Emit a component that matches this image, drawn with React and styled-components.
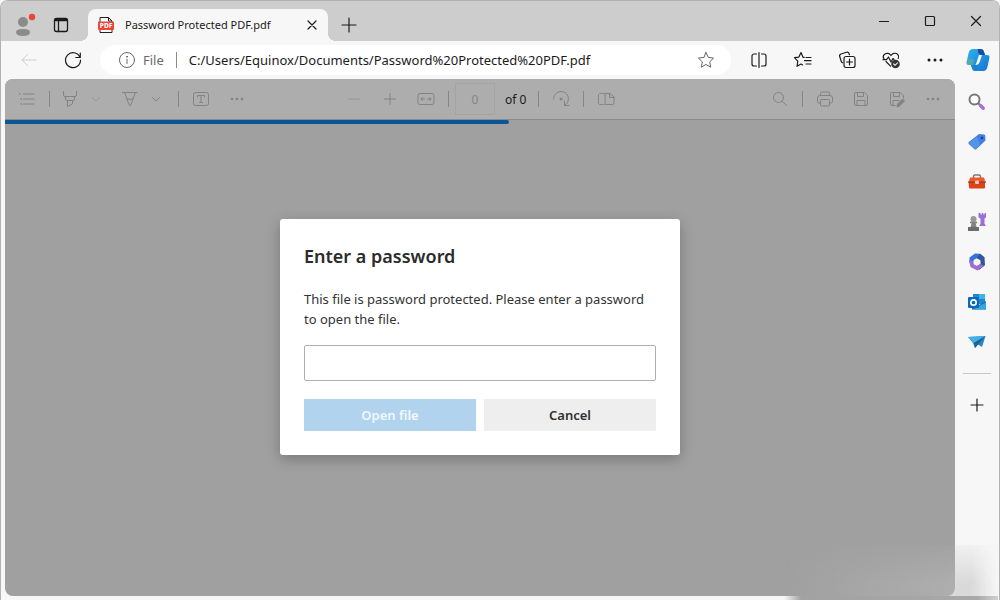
import React, { useState } from "react";
import styled, { createGlobalStyle } from "styled-components";

const GlobalStyle = createGlobalStyle`
  *, *::before, *::after { box-sizing: border-box; }
  body {
    margin: 0;
    font-family: "Noto Sans", "Open Sans", sans-serif;
    font-size: 13px;
    color: #1b1b1b;
    background: #f7f7f7;
  }
  button, input { font: inherit; color: inherit; }
  svg { display: block; flex: none; }
`;

const Window = styled.div`
  position: relative;
  display: flex;
  flex-direction: column;
  min-height: 100vh;
  background: #f7f7f7;
  border: 1px solid #b2b2b2;
  border-bottom-width: 0;
  border-radius: 8px 8px 0 0;
  overflow: hidden;
`;

const TitleBar = styled.header`
  display: flex;
  align-items: flex-end;
  height: 40px;
  padding-left: 4px;
  background: #cdcdcd;
`;

const IconButton = styled.button`
  display: flex;
  align-items: center;
  justify-content: center;
  flex: none;
  width: ${(p) => p.$w || 36}px;
  height: ${(p) => p.$h || 32}px;
  padding: 0;
  border: 0;
  background: transparent;
  color: ${(p) => p.$color || "#1b1b1b"};
`;

const Tab = styled.div`
  position: relative;
  display: flex;
  align-items: center;
  flex: 0 1 240px;
  height: 32px;
  margin-left: 9px;
  padding: 0 4px 0 10px;
  gap: 11px;
  border-radius: 8px 8px 0 0;
  background: #f7f7f7;
  &::before, &::after {
    content: "";
    position: absolute;
    bottom: 0;
    width: 8px;
    height: 8px;
  }
  &::before {
    right: 100%;
    background: radial-gradient(circle at 0 0, transparent 8px, #f7f7f7 8px);
  }
  &::after {
    left: 100%;
    background: radial-gradient(circle at 100% 0, transparent 8px, #f7f7f7 8px);
  }
`;

const TabTitle = styled.span`
  flex: 1;
  font-size: 11px;
  line-height: 16px;
  white-space: nowrap;
`;

const WindowControls = styled.div`
  display: flex;
  align-self: flex-start;
  margin-left: auto;
`;

const NavBar = styled.nav`
  display: flex;
  align-items: center;
  height: 38px;
  padding-left: 6px;
`;

const AddressBar = styled.label`
  display: flex;
  align-items: center;
  flex: 1;
  min-width: 0;
  height: 30px;
  margin: 0 6px 0 5px;
  padding: 0 9px 0 17px;
  border-radius: 15px;
  background: #fff;
`;

const Scheme = styled.span`
  margin-left: 6px;
  padding-right: 12px;
  border-right: 1px solid #8a8a8a;
  line-height: 16px;
  color: #6b6b6b;
`;

const AddressInput = styled.input`
  flex: 1;
  min-width: 0;
  padding: 0 0 0 12px;
  border: 0;
  outline: 0;
  background: transparent;
`;

const Body = styled.div`
  display: flex;
  flex: 1;
`;

const Viewer = styled.main`
  position: relative;
  display: flex;
  flex-direction: column;
  flex: 1;
  min-width: 0;
  margin: 0 0 4px 4px;
  border-radius: 8px;
  background: #a0a0a0;
  overflow: hidden;
`;

const PdfToolbar = styled.div`
  display: grid;
  grid-template-columns: 1fr auto 1fr;
  align-items: center;
  height: 41px;
  padding: 0 4px;
  border-bottom: 1px solid #8b8b8b;
  background: #adadad;
`;

const ToolGroup = styled.div`
  display: flex;
  align-items: center;
  justify-content: ${(p) => (p.$end ? "flex-end" : "flex-start")};
`;

const SplitTool = styled.div`
  display: flex;
  padding-right: 8px;
`;

const Separator = styled.span`
  flex: none;
  width: 1px;
  height: 16px;
  margin: 0 4px;
  background: #868686;
`;

const PageInput = styled.input`
  width: 40px;
  height: 32px;
  margin: 0 2px;
  padding: 0;
  border: 1px solid #a3a3a3;
  background: transparent;
  color: #858585;
  font-size: 12px;
  text-align: center;
`;

const PageCount = styled.span`
  width: 37px;
  padding-left: 8px;
  font-size: 12px;
  white-space: nowrap;
`;

const Progress = styled.div`
  height: 4px;
  border-radius: 0 2px 2px 0;
  background: #0b5796;
`;

const Overlay = styled.div`
  position: absolute;
  inset: 0;
  display: grid;
  place-items: center;
  padding-bottom: 2px;
`;

const Dialog = styled.form`
  width: 400px;
  padding: 24px;
  border-radius: 3px;
  background: #fff;
  box-shadow: 0 4px 14px rgba(0, 0, 0, 0.26);
`;

const DialogTitle = styled.h1`
  margin: 0 0 20px;
  font-size: 18px;
  font-weight: 600;
  line-height: 26px;
  color: #2b2b2b;
`;

const DialogText = styled.label`
  display: block;
  margin-bottom: 16px;
  line-height: 20px;
  color: #333;
`;

const PasswordInput = styled.input`
  display: block;
  width: 100%;
  height: 36px;
  padding: 0 8px;
  border: 1px solid #b0b0b0;
  border-radius: 2px;
  outline: 0;
  background: #fff;
`;

const DialogActions = styled.div`
  display: grid;
  grid-template-columns: 1fr 1fr;
  gap: 8px;
  margin-top: 18px;
`;

const DialogButton = styled.button`
  height: 32px;
  padding: 0;
  border: 0;
  background: ${(p) => (p.$primary ? "#b1d3ee" : "#eeeeee")};
  color: ${(p) => (p.$primary ? "#eef9ff" : "#303030")};
  font-weight: 600;
`;

const Sidebar = styled.aside`
  display: flex;
  flex-direction: column;
  align-items: center;
  flex: none;
  width: 44px;
  padding-top: 3px;
`;

const SidebarDivider = styled.hr`
  width: 28px;
  margin: 11px 0;
  border: 0;
  border-top: 1px solid #c8c8c8;
`;

const Haze = styled.div`
  position: absolute;
  right: 1px;
  bottom: 0;
  width: 214px;
  height: 55px;
  pointer-events: none;
  background:
    linear-gradient(to right, rgba(160, 160, 160, 0), #a2a2a2 8%, #a8a8a8 90%, #d0d0d0) bottom / 100% 4px no-repeat,
    linear-gradient(to right, rgba(188, 188, 188, 0) 0%, rgba(188, 188, 188, 0.5) 80%, rgba(205, 205, 205, 0.7) 88%, rgba(225, 225, 225, 0.5) 95%, rgba(245, 245, 245, 0.3) 100%);
  mask-image: linear-gradient(to bottom, rgba(0, 0, 0, 0.2), #000 70%);
`;

function Icon({ size = 20, sw = 1, children }) {
  return (
    <svg width={size} height={size} viewBox={`0 0 ${size} ${size}`} fill="none" stroke="currentColor" strokeWidth={sw} strokeLinecap="round" strokeLinejoin="round" aria-hidden="true">
      {children}
    </svg>
  );
}

const Plus = ({ r = 6.5, sw = 1.2 }) => <Icon sw={sw}><path d={`M10 ${10 - r}v${2 * r}M${10 - r} 10h${2 * r}`} /></Icon>;
const Minus = () => <Icon><path d="M4 10h11.500" /></Icon>;
const Chevron = () => <Icon size={12}><path d="M2.500 4.500 6 8l3.500-3.500" /></Icon>;
const Dots = ({ r = 1.5, gap = 6 }) => (
  <Icon><g fill="currentColor" stroke="none"><circle cx={10 - gap} cy="10" r={r} /><circle cx="10" cy="10" r={r} /><circle cx={10 + gap} cy="10" r={r} /></g></Icon>
);

const Profile = () => (
  <svg width="24" height="26" viewBox="0 0 24 26" aria-hidden="true">
    <circle cx="11" cy="10" r="5" fill="#8b8b8b" />
    <path d="M4 20q0-3 7-3t7 3q0 4-7 4t-7-4z" fill="#8b8b8b" />
    <circle cx="20" cy="5" r="3.200" fill="#ee4530" />
  </svg>
);
const TabActions = () => (
  <Icon sw={1.3}><rect x="3.500" y="3.500" width="13" height="13" rx="2" /><path d="M4.500 5h11" strokeWidth="2.600" /><path d="M7.500 6v10.500" /></Icon>
);
const PdfFile = () => (
  <svg width="16" height="18" viewBox="0 0 16 18" aria-hidden="true">
    <path d="M2 6V1.500h8.500L14 5v1M2 14v2.500h12V14" fill="#fff" stroke="#222" />
    <path d="M10.500 1.500V5H14" fill="none" stroke="#222" />
    <rect x="0" y="5.500" width="16" height="8.500" rx="1" fill="#ef4437" />
    <text x="8" y="12.300" textAnchor="middle" fontSize="6.500" fontWeight="800" fill="#fff" fontFamily="Noto Sans, sans-serif">PDF</text>
  </svg>
);
const Close = () => <Icon size={12} sw={1.2}><path d="m2 2 8 8M10 2l-8 8" /></Icon>;
const Back = () => <Icon><path d="M17 10H3M8.500 4.500 3 10l5.500 5.500" /></Icon>;
const Reload = () => <Icon sw={1.2}><path d="M16.800 7A7.500 7.500 0 1 0 17.500 10M17.300 3v4.500h-4.500" /></Icon>;
const Info = () => <Icon><circle cx="10" cy="10" r="7.500" /><path d="M10 9.200v4.300" /><circle cx="10" cy="6.700" r=".5" fill="currentColor" /></Icon>;
const Star = () => <Icon><path d="m10 2.500 2.300 4.900 5.300.7-3.900 3.700 1 5.300L10 14.500l-4.700 2.600 1-5.300L2.400 8.100l5.300-.7z" /></Icon>;
const SplitScreen = () => <Icon sw={1.2}><path d="M7.500 4H5a2 2 0 0 0-2 2v8a2 2 0 0 0 2 2h2.500M12.500 4H15a2 2 0 0 1 2 2v8a2 2 0 0 1-2 2h-2.500M10 2.500v15" /></Icon>;
const Favorites = () => <Icon sw={1.2}><path d="M11.200 7.300H10L8 2.600 5.900 7.100l-4.400.6 3.300 3.400-.8 5.200 4-2.300 1.600.9M13 7.500h5M11.500 10.700H18M13 14h5" /></Icon>;
const Collections = () => <Icon sw={1.2}><path d="M12.500 4.700 12 3.500a2 2 0 0 0-2.500-1.200l-5.500 1.700A2 2 0 0 0 2.700 6.500L4.300 11.500A2 2 0 0 0 5.500 12.800" /><rect x="7" y="6.500" width="11" height="11" rx="2" /><path d="M12.500 9v6M9.500 12h6" /></Icon>;
const Performance = () => (
  <Icon sw={1.2}>
    <path d="M3 9C.8 5.700 4 2.700 7.200 3.400 8.700 3.700 10 5.500 10 5.500s1.300-1.800 2.800-2.100C16 2.700 19 5.500 17.200 8.500M5 11.500l4.500 4.700M2 9.700h3.500L7.500 7l2.500 5 2-3.500 1 1.200" />
    <circle cx="14.500" cy="14" r="4.300" fill="#303830" stroke="none" /><path d="m12.700 14 1.300 1.300 2.500-2.500" stroke="#dfe4df" />
  </Icon>
);
const Copilot = () => (
  <svg width="24" height="24" viewBox="0 0 24 24" aria-hidden="true">
    <defs><linearGradient id="cp" x1="0" y1="0" x2="1" y2="1"><stop offset="0" stopColor="#29b5ea" /><stop offset="1" stopColor="#1672d6" /></linearGradient></defs>
    <path d="M7 1h8q2 0 2.700 2L19 7h2q3 0 2.400 3l-2 9q-1 4-4 4H9q-2 0-2.700-2L5 17H3Q0 17 .6 14l2-9Q3.500 1 7 1z" fill="url(#cp)" />
    <path d="M12 1h2q3 0 3.700 2L19 7h-4q-2 0-3-3z" fill="#174ca5" />
    <path d="m5 17 1.300 4Q7 23 10 23l2-4q-1-2-3-2z" fill="#1b83d0" />
    <path d="M1 12q5-2 7 0l-1 5H3q-3 0-2-5z" fill="#8cb577" opacity=".5" />
    <path d="M13 7h3l-2.300 7q-1 3-4.500 3 1-1 1.500-3z" fill="#f7fbff" />
  </svg>
);

const List = () => <Icon><path d="M6.500 5h10.500M6.500 10h10.500M6.500 15h10.500" /><path d="M2.500 5h.3M4 10h.3M4 15h.3" strokeWidth="1.500" /></Icon>;
const Highlighter = () => <Icon><path d="M3.500 2.500V6a1.500 1.500 0 0 0 1.500 1.500h10A1.500 1.500 0 0 0 16.500 6V2.500M5.500 7.500V10a1.500 1.500 0 0 0 1.500 1.500h6A1.500 1.500 0 0 0 14.500 10V7.500M7.500 11.500v6l5-2.700v-3.300" /></Icon>;
const Pen = () => <Icon><path d="M2.500 3.500h15M4.500 3.500l4.300 11.500L10 17l1.200-2 4.300-11.500M6.700 9.500c1.500 1.300 5.100 1.300 6.600 0" /></Icon>;
const TextTool = () => <Icon><rect x="2.500" y="3.500" width="15" height="13" rx="2" /><path d="M6.500 8V6.500h7V8M10 6.500v7M8.500 13.500h3" /></Icon>;
const FitWidth = () => <Icon><rect x="2" y="4.500" width="16" height="11" rx="2" /><path d="M5 10h3.500M6.500 8.500 5 10l1.500 1.500M15 10h-3.500M13.500 8.500 15 10l-1.500 1.500" /></Icon>;
const Rotate = () => <Icon><path d="M2.500 10A7.500 7.500 0 1 1 14 16.300M13.500 12v4.500H18" /><circle cx="10" cy="10" r="1" fill="currentColor" /></Icon>;
const PageView = () => <Icon><path d="M8 4.500H4A1.500 1.500 0 0 0 2.500 6v8A1.500 1.500 0 0 0 4 15.500h4" strokeDasharray="2 1" /><path d="M9.500 4.500h4.500l4 3.500v6a1.500 1.500 0 0 1-1.500 1.500h-7zM13.500 4.500V8.500H18" /></Icon>;
const Search = () => <Icon><circle cx="8.500" cy="8.500" r="5" /><path d="m12.200 12.200 4.300 4.300" /></Icon>;
const Printer = () => <Icon><path d="M5.500 6.500V4.500A1.500 1.500 0 0 1 7 3h6a1.500 1.500 0 0 1 1.500 1.500v2M5.500 14H4a1.500 1.500 0 0 1-1.500-1.500V9A2.500 2.500 0 0 1 5 6.500h10A2.500 2.500 0 0 1 17.500 9v3.500A1.500 1.500 0 0 1 16 14h-1.500" /><rect x="5.500" y="10.500" width="9" height="6.500" rx="1" /></Icon>;
const Save = () => <Icon><path d="M4.500 3.500h9l3 3v8.500a1.500 1.500 0 0 1-1.500 1.500H5A1.500 1.500 0 0 1 3.500 15V4.500a1 1 0 0 1 1-1zM6.500 3.500v4h6v-4M6 16.500v-5h8v5" /></Icon>;
const SaveAs = () => <Icon><path d="M8 16.500H5A1.500 1.500 0 0 1 3.500 15V4.500a1 1 0 0 1 1-1h9l3 3V9M6.500 3.500v4h6v-4M6 16.500v-5h6" /><path d="m10 17.500.5-2.500 5-5 2 2-5 5z" fill="currentColor" /></Icon>;

const ColorIcon = ({ children }) => <svg width="20" height="20" viewBox="0 0 20 20" aria-hidden="true">{children}</svg>;
const SideSearch = () => <ColorIcon><circle cx="7.500" cy="7.500" r="5" fill="#fff" stroke="#777" strokeWidth="2" /><path d="m11.200 11.200 2 2" stroke="#777" strokeWidth="2" /><path d="m13.500 13.500 2.700 2.700" stroke="#a66fd8" strokeWidth="3.500" strokeLinecap="round" /></ColorIcon>;
const Shopping = () => <ColorIcon><path d="M12 2 17 2.500q1 0 1.200 1l.3 5-9 8.500q-1.200 1-2.200 0l-5.500-5q-1-1 0-2z" fill="#3e7fe0" /><path d="m2 11 8-6.500 3 8-5 5z" fill="#66a0ee" opacity=".6" /><circle cx="15" cy="6" r="1.300" fill="#164583" /></ColorIcon>;
const Tools = () => <ColorIcon><path d="M6.500 6V4.500Q6.500 3 8 3h4q1.500 0 1.500 1.500V6" fill="none" stroke="#7a7a7a" strokeWidth="1.500" /><path d="M3 5.500h14L18.500 11h-17z" fill="#ed5a27" /><path d="M1.500 10H18v5.500q0 1-1 1H3q-1 0-1-1z" fill="#dc4418" /><path d="M1 10h18" stroke="#9e2e12" /><rect x="8" y="8.500" width="4" height="3.500" rx="1" fill="#e8c7b8" /></ColorIcon>;
const Games = () => <ColorIcon><path d="M11.500 1h2V2.500h1.300V1h1.500V2.500h1.200V1H19V5.500l-1.500 1v5L18.800 14h-6.500L13.500 11.500V6.500l-2-1z" fill="#9a70d6" /><circle cx="6.500" cy="7" r="3" fill="#999" /><path d="M3 9.500h7v1.700H8.700l1 4.300H3.500l1-4.300H3z" fill="#858585" /><path d="M1 15h11v4H1z" fill="#6c6c6c" /></ColorIcon>;
const Office = () => <ColorIcon><path d="m8 1.500 5 .2 4.500 4-3.500 3-4.500-2.500-3 2V14l-4-3V5.500z" fill="#3375d8" /><path d="m13 1.700 4.500 3.500.5 8L12 18l-2-4 3.500-2V7.500L9.500 6z" fill="#315798" /><path d="m2 8 4 1v3l4 2 3.500-2 3.500 2-6.500 4.500-7-3.500z" fill="#a06bd2" /><path d="m10 7 3 1.500v3l-3 1.500-3-1.500v-3z" fill="#f7f7f7" /></ColorIcon>;
const Outlook = () => <ColorIcon><path d="M6 2h12v10H6z" fill="#2386cf" /><path d="M12 2h6v5h-6z" fill="#3fb1ea" /><path d="M5 9l7 4 7-4v8.500H5z" fill="#1e6fb8" /><path d="m6 17.500 13-7v7z" fill="#31a8df" /><rect x="1" y="5" width="11" height="11" rx="1" fill="#086bb9" /><circle cx="6.500" cy="10.500" r="2.700" fill="none" stroke="#fff" strokeWidth="1.700" /></ColorIcon>;
const Drop = () => <ColorIcon><path d="M1 5 18.500 4 15 15l-4-2.500L8 16l-2-5z" fill="#2585c9" /><path d="M1 5 18.500 4 6.500 11z" fill="#42b0e8" /><path d="m7 11 11.500-7L11 12.500 8 16z" fill="#23628d" /></ColorIcon>;

const navTools = [
  ["Split screen", <SplitScreen />],
  ["Favorites", <Favorites />],
  ["Collections", <Collections />],
  ["Browser essentials", <Performance />],
  ["Settings and more", <Dots />],
];

const sidebarTools = [
  ["Search", <SideSearch />],
  ["Shopping", <Shopping />],
  ["Tools", <Tools />],
  ["Games", <Games />],
  ["Microsoft 365", <Office />],
  ["Outlook", <Outlook />],
  ["Drop", <Drop />],
];

const dim = "#838383";
const faint = "#969696";

function Tool({ label, color = dim, children, ...rest }) {
  return <IconButton type="button" aria-label={label} $color={color} {...rest}>{children}</IconButton>;
}

export default function App() {
  const [url, setUrl] = useState("C:/Users/Equinox/Documents/Password%20Protected%20PDF.pdf");
  const [password, setPassword] = useState("");
  const loaded = 53;

  return (
    <>
      <GlobalStyle />
      <Window>
        <TitleBar>
          <IconButton aria-label="Profile" $w={38}><Profile /></IconButton>
          <IconButton aria-label="Tab actions"><TabActions /></IconButton>
          <Tab>
            <PdfFile />
            <TabTitle>Password Protected PDF.pdf</TabTitle>
            <IconButton aria-label="Close tab" $w={24} $h={24}><Close /></IconButton>
          </Tab>
          <IconButton aria-label="New tab" $w={42}><Plus r={7} /></IconButton>
          <WindowControls>
            <IconButton aria-label="Minimize" $w={46} $h={40}><Icon size={12} sw={1.2}><path d="M1.500 6.500h9" /></Icon></IconButton>
            <IconButton aria-label="Maximize" $w={46} $h={40}><Icon size={12} sw={1.2}><rect x="1.500" y="1.500" width="9" height="9" rx="1" /></Icon></IconButton>
            <IconButton aria-label="Close" $w={46} $h={40}><Icon size={12} sw={1.2}><path d="m1.500 1.500 9 9M10.500 1.500l-9 9" /></Icon></IconButton>
          </WindowControls>
        </TitleBar>

        <NavBar>
          <IconButton aria-label="Back" $w={44} $color="#cfcfcf"><Back /></IconButton>
          <IconButton aria-label="Refresh" $w={44}><Reload /></IconButton>
          <AddressBar>
            <IconButton as="span" $w={20} $h={20} $color="#666"><Info /></IconButton>
            <Scheme>File</Scheme>
            <AddressInput aria-label="Address" value={url} onChange={(e) => setUrl(e.target.value)} />
            <IconButton type="button" aria-label="Add to favorites" $w={32} $h={28} $color="#666"><Star /></IconButton>
          </AddressBar>
          {navTools.map(([label, icon]) => (
            <IconButton key={label} aria-label={label} $w={44}>{icon}</IconButton>
          ))}
          <IconButton aria-label="Copilot" $w={42}><Copilot /></IconButton>
        </NavBar>

        <Body>
          <Viewer>
            <PdfToolbar role="toolbar">
              <ToolGroup>
                <Tool label="Contents"><List /></Tool>
                <Separator />
                <SplitTool>
                  <Tool label="Highlight" $w={32}><Highlighter /></Tool>
                  <Tool label="Highlight options" $w={20} color={faint}><Chevron /></Tool>
                </SplitTool>
                <SplitTool>
                  <Tool label="Draw" $w={32}><Pen /></Tool>
                  <Tool label="Draw options" $w={20}><Chevron /></Tool>
                </SplitTool>
                <Separator />
                <Tool label="Add text"><TextTool /></Tool>
                <Tool label="More tools"><Dots r={1.3} gap={5} /></Tool>
              </ToolGroup>
              <ToolGroup>
                <Tool label="Zoom out" color={faint}><Minus /></Tool>
                <Tool label="Zoom in"><Plus r={5.5} sw={1} /></Tool>
                <Tool label="Fit to width"><FitWidth /></Tool>
                <Separator />
                <PageInput aria-label="Page number" defaultValue="0" />
                <PageCount>of 0</PageCount>
                <Separator />
                <Tool label="Rotate"><Rotate /></Tool>
                <Separator />
                <Tool label="Page view"><PageView /></Tool>
              </ToolGroup>
              <ToolGroup $end>
                <Tool label="Find"><Search /></Tool>
                <Separator />
                <Tool label="Print"><Printer /></Tool>
                <Tool label="Save"><Save /></Tool>
                <Tool label="Save as"><SaveAs /></Tool>
                <Tool label="More"><Dots r={1.3} gap={5} /></Tool>
              </ToolGroup>
            </PdfToolbar>
            <Progress role="progressbar" aria-label="Loading" aria-valuenow={loaded} style={{ width: `${loaded}%` }} />
            <Overlay>
              <Dialog role="dialog" aria-labelledby="dialog-title" onSubmit={(e) => e.preventDefault()}>
                <DialogTitle id="dialog-title">Enter a password</DialogTitle>
                <DialogText htmlFor="password">
                  This file is password protected. Please enter a password to open the file.
                </DialogText>
                <PasswordInput id="password" type="password" value={password} onChange={(e) => setPassword(e.target.value)} />
                <DialogActions>
                  <DialogButton $primary type="submit" disabled={!password}>Open file</DialogButton>
                  <DialogButton type="button">Cancel</DialogButton>
                </DialogActions>
              </Dialog>
            </Overlay>
          </Viewer>
          <Sidebar>
            {sidebarTools.map(([label, icon]) => (
              <IconButton key={label} aria-label={label} $w={40} $h={40}>{icon}</IconButton>
            ))}
            <SidebarDivider />
            <IconButton aria-label="Customize" $w={40} $h={40}><Plus r={6} /></IconButton>
          </Sidebar>
        </Body>
        <Haze />
      </Window>
    </>
  );
}
